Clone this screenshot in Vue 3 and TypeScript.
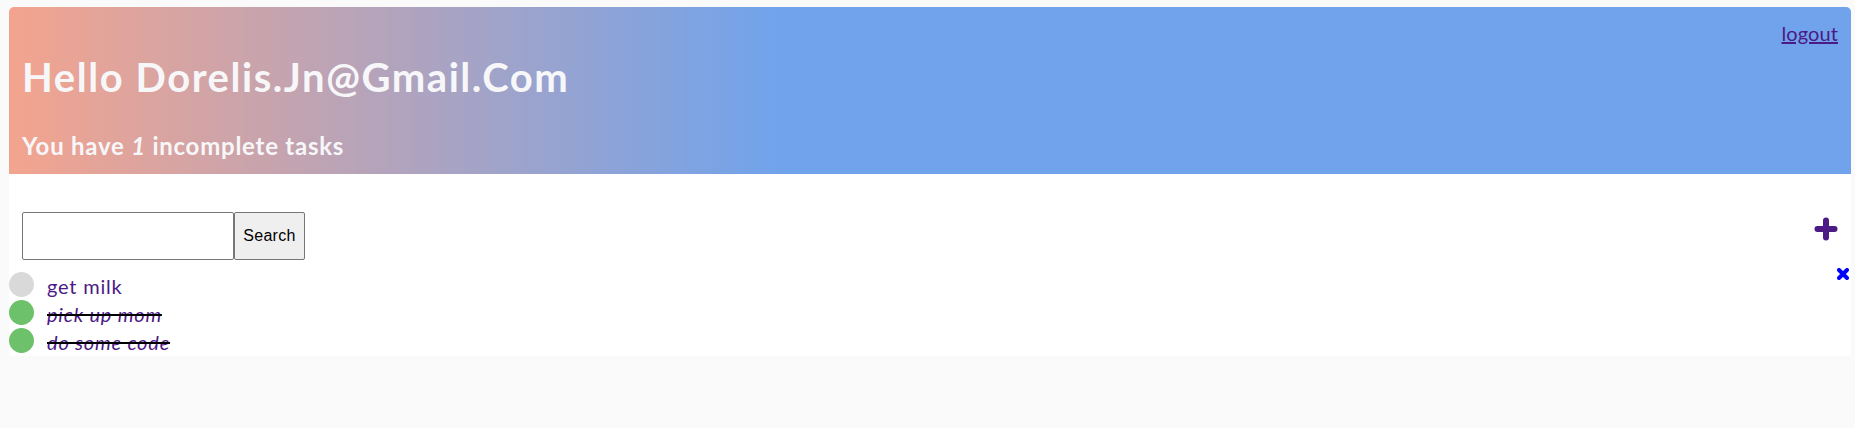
<script setup lang="ts">
import { ref } from 'vue'

interface Task {
  id: number
  title: string
  done: boolean
}

const query = ref('')
const tasks = ref<Task[]>([
  { id: 1, title: 'get milk', done: false },
  { id: 2, title: 'pick up mom', done: true },
  { id: 3, title: 'do some code', done: true },
])
</script>

<template>
  <div class="page">
    <header class="banner">
      <div class="logout-row">
        <a href="#" class="logout">logout</a>
      </div>
      <h1>Hello Dorelis.Jn@Gmail.Com</h1>
      <h3>You have <em>1</em> incomplete tasks</h3>
    </header>

    <main class="content">
      <div class="toolbar">
        <form class="search" @submit.prevent>
          <input v-model="query" type="text" />
          <button type="submit">Search</button>
        </form>
        <svg class="add-icon" viewBox="0 0 24 24" width="24" height="24" aria-label="add">
          <path d="M12 3.5v17M3.5 12h17" />
        </svg>
      </div>

      <ul class="tasks">
        <li v-for="(task, index) in tasks" :key="task.id" class="task">
          <span class="dot" :class="{ done: task.done }"></span>
          <span class="title" :class="{ done: task.done }">{{ task.title }}</span>
          <svg v-if="index === 0" class="remove-icon" viewBox="0 0 12 12" width="12" height="12" aria-label="remove">
            <path d="M2 2l8 8M10 2l-8 8" />
          </svg>
        </li>
      </ul>
    </main>
  </div>
</template>

<style>
html,
body {
  margin: 0;
  background: #fafafa;
}
</style>

<style scoped>
.page {
  margin: 7px 4px 0 9px;
  height: 421px;
  font-family: "Comic Sans MS", "Lato", "Open Sans", sans-serif;
  color: #4b1a84;
}

.banner {
  height: 167px;
  box-sizing: border-box;
  padding: 16px 13px 0 13px;
  border-radius: 5px 5px 0 0;
  background: linear-gradient(to right, #f3a48e, #70a3ec 42%);
  color: #f7f7f9;
  overflow: hidden;
}

.logout-row {
  display: flex;
  justify-content: flex-end;
  height: 20px;
}

.logout {
  color: #4b1a84;
  font-size: 20px;
  line-height: 20px;
  letter-spacing: 0.1px;
}

h1 {
  margin: 10px 0 0;
  font-size: 40px;
  line-height: 48px;
  font-weight: 700;
  letter-spacing: 1.55px;
}

h3 {
  margin: 31px 0 0;
  font-size: 24px;
  line-height: 28px;
  font-weight: 700;
  letter-spacing: 0.75px;
}

.content {
  background: #fff;
  height: 182px;
  box-sizing: border-box;
  padding-top: 38px;
}

.toolbar {
  display: flex;
  justify-content: space-between;
  align-items: flex-start;
  height: 60px;
  padding-left: 13px;
  padding-right: 13px;
}

.search {
  display: flex;
}

.search input {
  width: 212px;
  height: 48px;
  box-sizing: border-box;
  border: 1px solid #767676;
  border-radius: 2px;
  background: #fff;
}

.search button {
  width: 71px;
  height: 48px;
  box-sizing: border-box;
  border: 1px solid #767676;
  border-radius: 2px;
  background: #efefef;
  color: #000;
  font-family: "Liberation Sans", Arial, sans-serif;
  font-size: 16px;
  letter-spacing: 0.3px;
  padding: 0;
}

.add-icon {
  margin-top: 5px;
}

.add-icon path {
  fill: none;
  stroke: #4b1a84;
  stroke-width: 6;
  stroke-linecap: round;
}

.tasks {
  list-style: none;
  margin: 0;
  padding: 0;
}

.task {
  display: flex;
  align-items: flex-start;
  height: 28px;
  padding-right: 2px;
}

.dot {
  width: 25px;
  height: 25px;
  flex: none;
  border-radius: 50%;
  background: #d9d9d9;
}

.dot.done {
  background: #6cc16a;
}

.title {
  margin-left: 13px;
  font-size: 20px;
  line-height: 28px;
  letter-spacing: 0.8px;
}

.title.done {
  font-style: italic;
  text-decoration: line-through;
  text-decoration-color: #000;
  text-decoration-thickness: 2px;
}

.remove-icon {
  margin-left: auto;
  margin-top: -4px;
}

.remove-icon path {
  fill: none;
  stroke: #0000ff;
  stroke-width: 4;
  stroke-linecap: round;
}
</style>
